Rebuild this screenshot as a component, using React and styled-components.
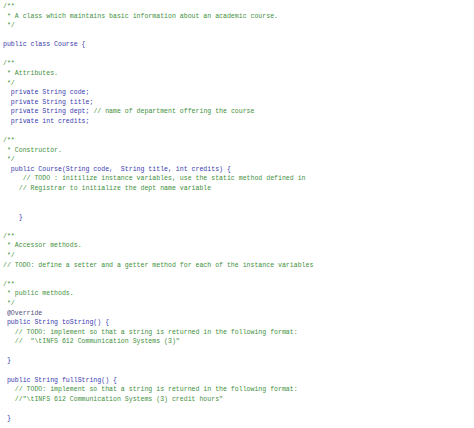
import React from 'react';
import styled, { createGlobalStyle } from 'styled-components';

const GlobalStyle = createGlobalStyle`
  html, body {
    margin: 0;
    padding: 0;
    background: #ffffff;
  }
`;

const Editor = styled('div')(() => ({
  boxSizing: 'border-box',
  width: '474px',
  height: '428px',
  padding: '2px 0 0 3px',
  background: '#ffffff',
  fontFamily: '"Liberation Mono", "Courier New", monospace',
  fontSize: '6.55px',
  lineHeight: '9.58px',
  overflow: 'hidden',
}));

const Line = styled('div')(() => ({
  height: '9.58px',
  whiteSpace: 'pre',
}));

const colors = {
  code: '#3a3aae',
  comment: '#3f9040',
  note: '#50507a',
};

const Token = styled('span')(({ $kind }) => ({
  color: colors[$kind],
}));

// each line: list of [kind, text]
const lines = [
  [['comment', '/**']],
  [['comment', ' * A class which maintains basic information about an academic course.']],
  [['comment', ' */']],
  [],
  [['code', 'public class Course {']],
  [],
  [['comment', '/**']],
  [['comment', ' * Attributes.']],
  [['comment', ' */']],
  [['code', '  private String code;']],
  [['code', '  private String title;']],
  [['code', '  private String dept; '], ['comment', '// name of department offering the course']],
  [['code', '  private int credits;']],
  [],
  [['comment', '/**']],
  [['comment', ' * Constructor.']],
  [['comment', ' */']],
  [['code', '  public Course(String code,  String title, int credits) {']],
  [['comment', '     // TODO : initilize instance variables, use the static method defined in']],
  [['comment', '    // Registrar to initialize the dept name variable']],
  [],
  [],
  [['code', '    }']],
  [],
  [['comment', '/**']],
  [['comment', ' * Accessor methods.']],
  [['comment', ' */']],
  [['comment', '// TODO: define a setter and a getter method for each of the instance variables']],
  [],
  [['comment', '/**']],
  [['comment', ' * public methods.']],
  [['comment', ' */']],
  [['note', ' @Override']],
  [['code', ' public String toString() {']],
  [['comment', '   // TODO: implement so that a string is returned in the following format:']],
  [['comment', '   //  "\\tINFS 612 Communication Systems (3)"']],
  [],
  [['code', ' }']],
  [],
  [['code', ' public String fullString() {']],
  [['comment', '   // TODO: implement so that a string is returned in the following format:']],
  [['comment', '   //"\\tINFS 612 Communication Systems (3) credit hours"']],
  [],
  [['code', ' }']],
];

export default function App() {
  return (
    <>
      <GlobalStyle />
      <Editor>
        {lines.map((parts, i) => (
          <Line key={i}>
            {parts.map(([kind, text], j) => (
              <Token key={j} $kind={kind}>
                {text}
              </Token>
            ))}
          </Line>
        ))}
      </Editor>
    </>
  );
}
